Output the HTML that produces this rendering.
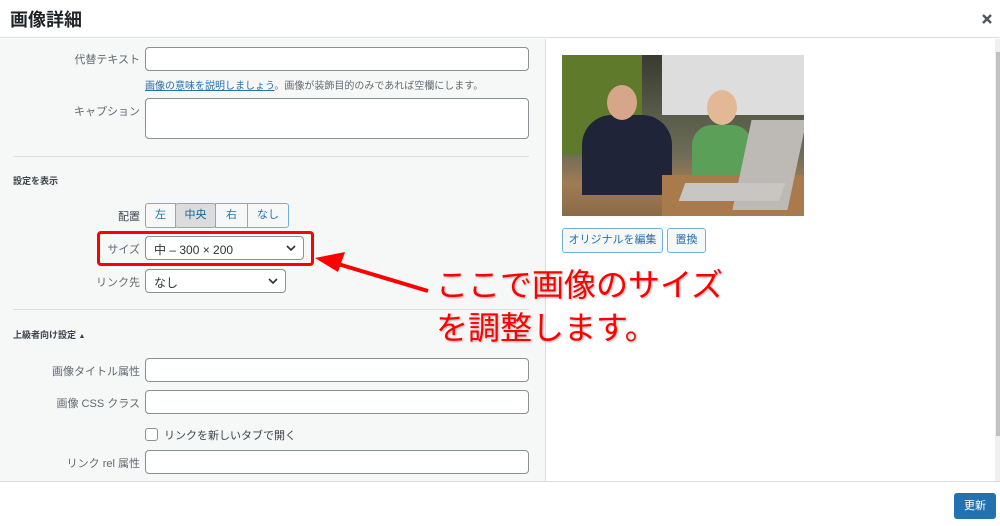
<!DOCTYPE html>
<html><head><meta charset="utf-8"><style>
*{box-sizing:border-box;margin:0;padding:0}
body{width:1000px;height:526px;overflow:hidden;background:#fff;font-family:"Liberation Sans","Noto Sans CJK JP",sans-serif;position:relative;color:#3c434a}
.a{position:absolute}
.lbl{position:absolute;font-size:11px;color:#646970;text-align:right;width:140px;left:0}
.inp{position:absolute;background:#fff;border:1px solid #8c8f94;border-radius:4px;left:145px;width:384px;height:24px}
.btn{position:absolute;border:1px solid #72aee6;border-radius:3px;color:#2271b1;background:#f6f7f7;font-size:11px;text-align:center;line-height:23px;height:25px}
.chev{position:absolute;right:7px;top:8px}
</style></head><body>
<div class="a" style="left:0;top:0;width:1000px;height:38px;border-bottom:1px solid #dcdcde;background:#fff"></div>
<div class="a" style="left:10px;top:6px;font-size:18px;font-weight:bold;color:#1d2327">画像詳細</div>
<svg class="a" style="left:982px;top:14px" width="10" height="10"><path d="M1 1L9 9M9 1L1 9" stroke="#50575e" stroke-width="2.4"/></svg>
<div class="a" style="left:0;top:39px;width:546px;height:443px;background:#f6f7f7;border-right:1px solid #dcdcde"></div>
<div class="a" style="left:995px;top:39px;width:5px;height:443px;background:#f0f0f0"></div>
<div class="a" style="left:996px;top:52px;width:4px;height:384px;background:#c1c1c1"></div>
<div class="a" style="left:0;top:481px;width:1000px;height:1px;background:#dcdcde"></div>

<div class="lbl" style="top:51px">代替テキスト</div>
<div class="inp" style="top:47px"></div>
<div class="a" style="left:145px;top:77px;font-size:10px;color:#646970"><span style="color:#2271b1;text-decoration:underline">画像の意味を説明しましょう</span>。画像が装飾目的のみであれば空欄にします。</div>
<div class="lbl" style="top:103px">キャプション</div>
<div class="inp" style="top:98px;height:41px"></div>
<div class="a" style="left:13px;top:156px;width:516px;height:1px;background:#dcdcde"></div>
<div class="a" style="left:13px;top:174px;font-size:9px;font-weight:bold;color:#3c434a">設定を表示</div>
<div class="lbl" style="top:208px;color:#3c434a">配置</div>
<div class="btn" style="left:145px;top:203px;width:31px;border-radius:3px 0 0 3px">左</div>
<div class="btn" style="left:175px;top:203px;width:41px;background:#dcdcde;color:#135e96;border-color:#72aee6">中央</div>
<div class="btn" style="left:215px;top:203px;width:33px;border-radius:0">右</div>
<div class="btn" style="left:247px;top:203px;width:42px;border-radius:0 3px 3px 0">なし</div>
<div class="lbl" style="top:241px">サイズ</div>
<div class="inp" style="top:236px;width:159px;color:#2c3338;font-size:12px;padding:4px 8px">中 – 300 × 200<svg class="chev" width="10" height="7"><path d="M1 1L5 5L9 1" stroke="#2c3338" stroke-width="1.6" fill="none"/></svg></div>
<div class="lbl" style="top:274px">リンク先</div>
<div class="inp" style="top:269px;width:141px;color:#2c3338;font-size:12px;padding:4px 8px">なし<svg class="chev" width="10" height="7"><path d="M1 1L5 5L9 1" stroke="#2c3338" stroke-width="1.6" fill="none"/></svg></div>
<div class="a" style="left:97px;top:231px;width:217px;height:35px;border:3px solid #f00;border-radius:4px"></div>
<div class="a" style="left:13px;top:309px;width:516px;height:1px;background:#dcdcde"></div>
<div class="a" style="left:13px;top:328px;font-size:9px;font-weight:bold;color:#3c434a">上級者向け設定 <span style="font-size:7px">▲</span></div>
<div class="lbl" style="top:363px">画像タイトル属性</div>
<div class="inp" style="top:358px"></div>
<div class="lbl" style="top:395px">画像 CSS クラス</div>
<div class="inp" style="top:390px"></div>
<div class="a" style="left:145px;top:428px;width:13px;height:13px;border:1px solid #8c8f94;border-radius:3px;background:#fff"></div>
<div class="a" style="left:164px;top:427px;font-size:11px;color:#3c434a">リンクを新しいタブで開く</div>
<div class="lbl" style="top:455px">リンク rel 属性</div>
<div class="inp" style="top:450px"></div>

<div class="a" style="left:562px;top:55px;width:242px;height:161px;overflow:hidden;background:linear-gradient(180deg,#3a3a30 0%,#5a5e4a 40%,#6c6a58 60%,#a07c55 80%,#8a6a48 100%)">
<div class="a" style="left:0;top:0;width:80px;height:100px;background:#5f7a2a"></div>
<div class="a" style="left:100px;top:0;width:142px;height:60px;background:#ddd"></div>
<div class="a" style="left:20px;top:60px;width:90px;height:80px;background:#1f2438;border-radius:30px 30px 0 0"></div>
<div class="a" style="left:45px;top:30px;width:30px;height:35px;background:#d6a68a;border-radius:50%"></div>
<div class="a" style="left:130px;top:70px;width:60px;height:55px;background:#5aa058;border-radius:20px 20px 0 0"></div>
<div class="a" style="left:145px;top:35px;width:30px;height:35px;background:#e3b896;border-radius:50%"></div>
<div class="a" style="left:100px;top:120px;width:142px;height:41px;background:#a87a4c"></div>
<div class="a" style="left:180px;top:65px;width:55px;height:90px;background:#bdbab5;transform:skewX(-12deg)"></div>
<div class="a" style="left:120px;top:128px;width:100px;height:18px;background:#c8c6c2;transform:skewX(-20deg)"></div>
</div>
<div class="btn" style="left:562px;top:228px;width:101px;background:#f6f7f7">オリジナルを編集</div>
<div class="btn" style="left:667px;top:228px;width:39px">置換</div>

<svg class="a" style="left:0;top:0" width="1000" height="526"><path d="M428 291 L338 264" stroke="#f00" stroke-width="4"/><polygon points="315,258 345,252 338,272" fill="#f00"/></svg>
<div class="a" style="left:436px;top:262px;font-size:32px;line-height:43px;color:#f00;font-family:'Noto Sans CJK JP',sans-serif;text-shadow:1px 1px 2px rgba(0,0,0,.3)">ここで画像のサイズ<br>を調整します。</div>

<div class="a" style="left:954px;top:493px;width:42px;height:26px;background:#2271b1;border-radius:3px;color:#fff;font-size:11px;text-align:center;line-height:26px">更新</div>
</body></html>
